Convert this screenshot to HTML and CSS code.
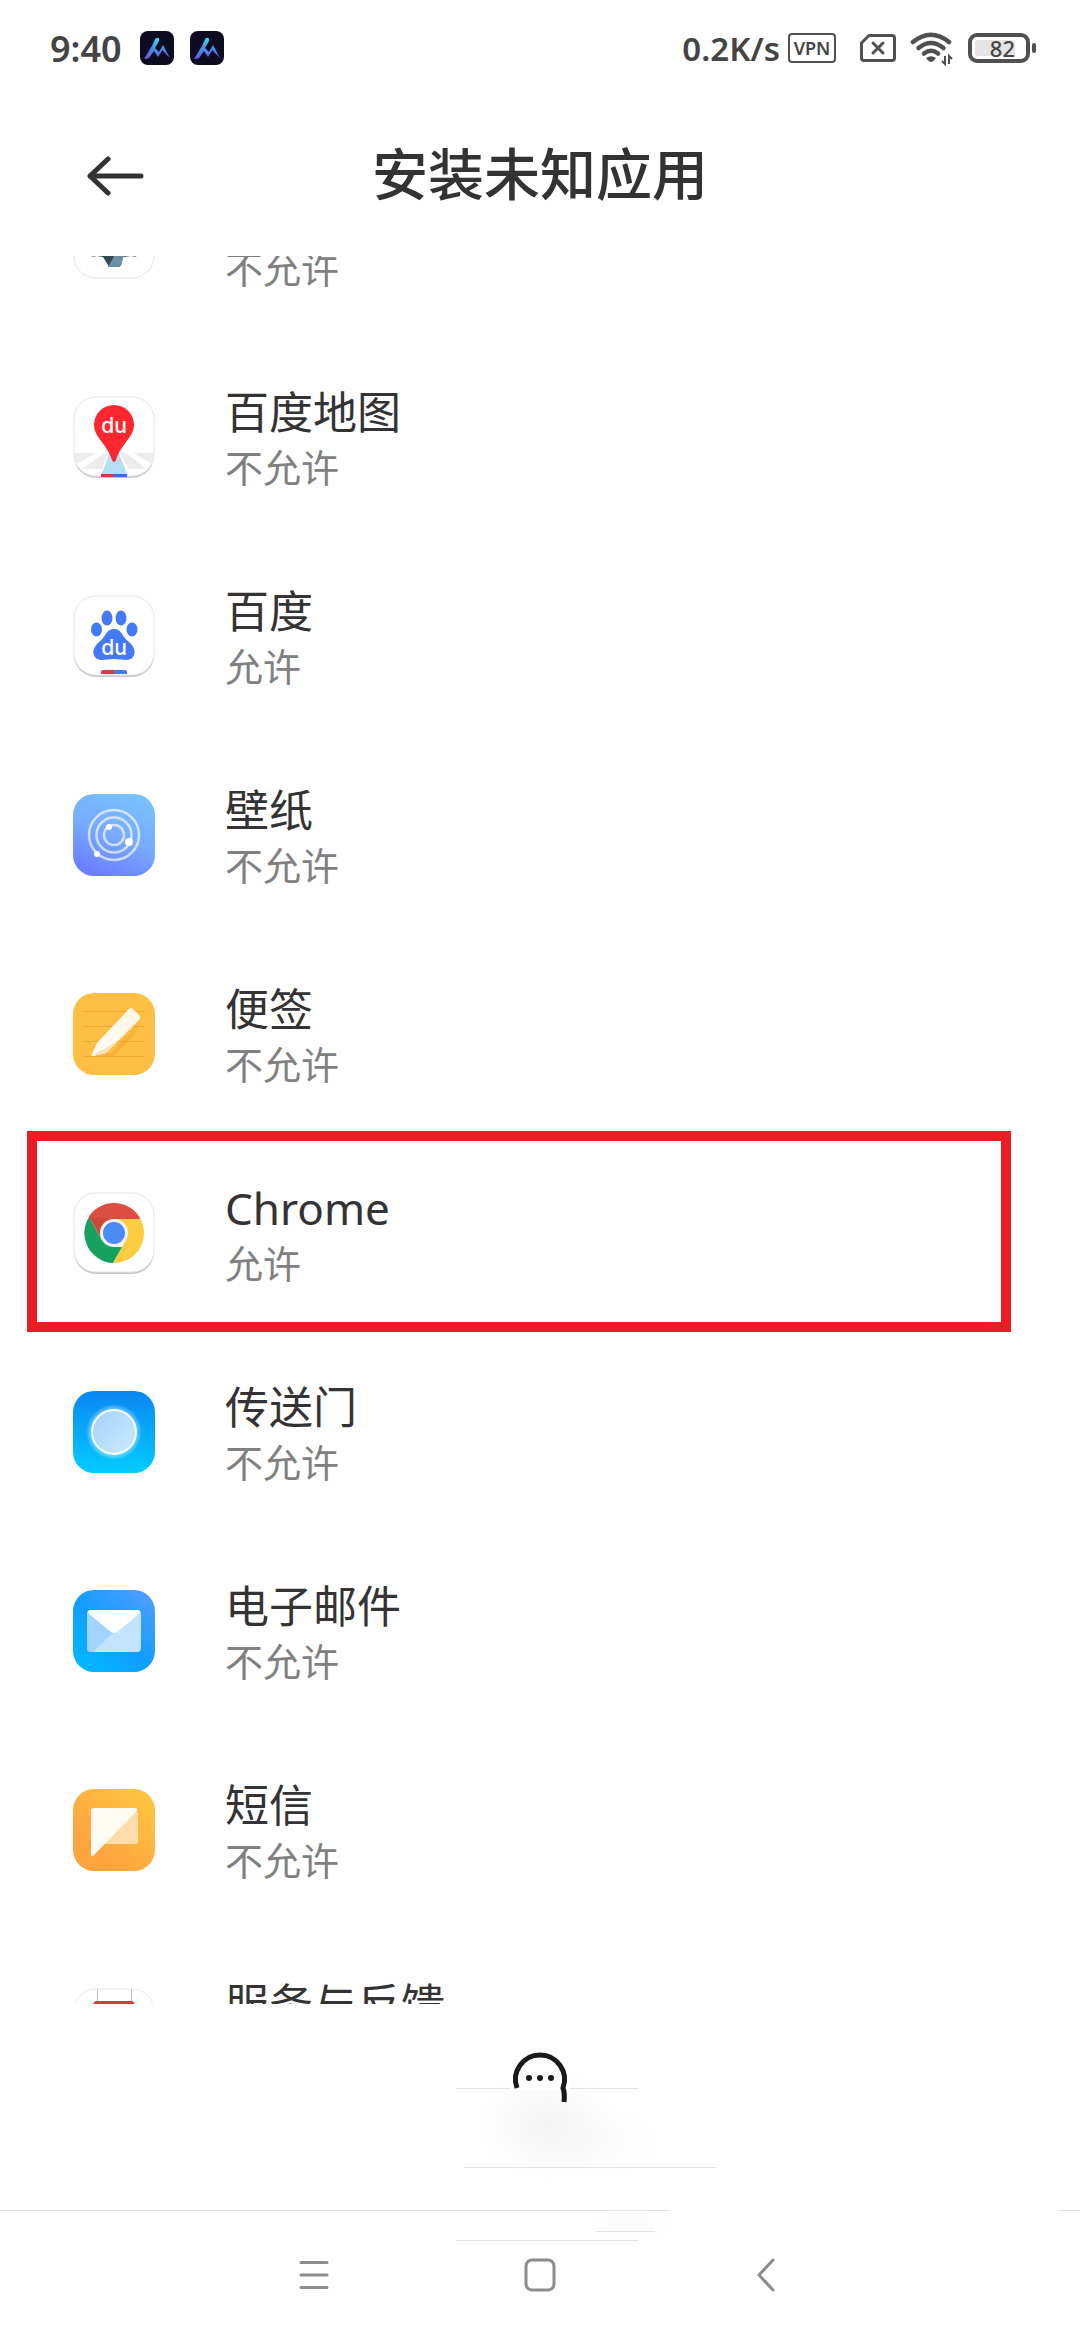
FILE: index.html
```
<!DOCTYPE html>
<html lang="zh-CN">
<head>
  <meta charset="UTF-8" />
  <meta name="viewport" content="width=device-width, initial-scale=1.0" />
  <title>安装未知应用</title>
  <link rel="stylesheet" href="styles.css">
</head>
<body>
  <div class="status-bar">
    <div class="status-left">
      <span class="time">9:40</span>
      <svg class="notice" viewBox="0 0 34 34">
        <defs>
          <linearGradient id="peak" x1="0" y1="0" x2="0" y2="1">
            <stop offset="0" stop-color="#3fe0ea" />
            <stop offset="0.5" stop-color="#4a90e8" />
            <stop offset="1" stop-color="#6a55d8" />
          </linearGradient>
        </defs>
        <rect width="34" height="34" rx="8" fill="#0d0b22" />
        <path id="mountain" d="M4 28L12 15L15.500 7.500Q17 6 19 7.500L19 10L15 17L19 21L23 14L30 27L24 21L22.500 19L18 26L14 20L9 27Q7 28 4 28Z" fill="url(#peak)" />
      </svg>
      <svg class="notice" viewBox="0 0 34 34">
        <rect width="34" height="34" rx="8" fill="#0d0b22" />
        <use href="#mountain" />
      </svg>
    </div>
    <div class="status-right">
      <span class="speed">0.2K/s</span>
      <span class="vpn">VPN</span>
      <svg class="sim" width="36" height="28" viewBox="0 0 36 28" fill="none" stroke="#505050" stroke-linejoin="round" stroke-linecap="round">
        <path d="M9 1.500H32Q34.500 1.500 34.500 4V24Q34.500 26.500 32 26.500H4Q1.500 26.500 1.500 24V9Z" stroke-width="3" />
        <path d="M13 9L23 19M23 9L13 19" stroke-width="3" />
      </svg>
      <svg class="wifi" width="44" height="34" viewBox="0 0 44 34">
        <g fill="none" stroke="#505050" stroke-width="4.500" stroke-linecap="round">
          <path d="M3 10Q21 -4.500 39 10" />
          <path d="M8.500 16Q21 6 33.500 16" />
          <path d="M14 21.500Q21 16 28 21.500" />
        </g>
        <path d="M16 26Q21 22.500 26 26Q23 30 21 30Q19 30 16 26Z" fill="#505050" />
        <path d="M35 24V32L32 29M39 32V24L42 27" fill="none" stroke="#505050" stroke-width="2" />
      </svg>
      <span class="battery"><span class="level">82</span></span>
    </div>
  </div>

  <header class="title-bar">
    <button class="back" aria-label="返回">
      <svg width="58" height="40" viewBox="0 0 58 40" fill="none" stroke="#333" stroke-width="5" stroke-linecap="round" stroke-linejoin="round">
        <path d="M54 20H3M21 3L3 20L21 37" />
      </svg>
    </button>
    <h1>安装未知应用</h1>
  </header>

  <main class="list">
    <a class="row" href="#">
      <svg class="icon" viewBox="0 0 82 82">
        <rect x="1" y="1" width="80" height="80" rx="22" fill="#fff" stroke="#e4e4e4" />
        <path d="M18 60L26 56L30 58L41 48L52 58L56 56L64 60L58 59L50 60L48 68Q47 70 45 70H37Q35 70 35 68L30 60L24 59Z" fill="#33474f" />
        <path d="M45 52L51 59L48 68Q47 70 45 70H35Z" fill="#6d8fa3" />
      </svg>
      <div class="info"><span class="name"></span><span class="state">不允许</span></div>
    </a>

    <a class="row" href="#">
      <svg class="icon" viewBox="0 0 82 82">
        <rect x="1" y="3" width="80" height="79" rx="22" fill="#c9c9c9" />
        <rect x="1" y="1" width="80" height="79" rx="22" fill="#fff" stroke="#e6e6e6" />
        <path d="M2 57H23L2 69ZM31 57H35L29 73H9ZM47 57H53L73 73H56ZM61 57H80V69Z" fill="#ececec" />
        <path d="M36 58H46L55 80H28Z" fill="#b3def3" />
        <path d="M28 78H41V81H28Z" fill="#d8354a" />
        <path d="M41 78H54V81H41Z" fill="#3d6ee0" />
        <path d="M41 9A20 20 0 0 0 21 29C21 41 34 48 39 64Q41 68 43 64C48 48 61 41 61 29A20 20 0 0 0 41 9Z" fill="#fb292f" />
        <text class="du" x="41" y="37" fill="#fff">du</text>
      </svg>
      <div class="info"><span class="name">百度地图</span><span class="state">不允许</span></div>
    </a>

    <a class="row" href="#">
      <svg class="icon" viewBox="0 0 82 82">
        <rect x="1" y="3" width="80" height="79" rx="22" fill="#c9c9c9" />
        <rect x="1" y="1" width="80" height="79" rx="22" fill="#fff" stroke="#e6e6e6" />
        <g fill="#4479f5">
          <ellipse cx="34" cy="23" rx="5.500" ry="7.500" />
          <ellipse cx="48" cy="23" rx="5.500" ry="7.500" />
          <ellipse cx="23.500" cy="34.500" rx="5.500" ry="7" />
          <ellipse cx="59" cy="34.500" rx="5.500" ry="7" />
          <path d="M41 34C49 34 49 42 56 47C62 52 63 58 60 62C56 67 50 64 41 64C32 64 26 67 22 62C19 58 20 52 26 47C33 42 33 34 41 34Z" />
        </g>
        <text class="du" x="41" y="60" fill="#fff">du</text>
        <path d="M41 75H30Q28 75 28 77V79H41Z" fill="#d33c49" />
        <path d="M41 75H52Q54 75 54 77V79H41Z" fill="#4479f5" />
      </svg>
      <div class="info"><span class="name">百度</span><span class="state">允许</span></div>
    </a>

    <a class="row" href="#">
      <svg class="icon" viewBox="0 0 82 82">
        <defs>
          <linearGradient id="wallpaper" x1="0.700" y1="0" x2="0.300" y2="1">
            <stop offset="0" stop-color="#78c1ff" />
            <stop offset="0.500" stop-color="#78abfd" />
            <stop offset="1" stop-color="#6b7dff" />
          </linearGradient>
        </defs>
        <rect width="82" height="82" rx="21" fill="url(#wallpaper)" />
        <g fill="none" stroke="#fff" stroke-opacity="0.650" stroke-width="2.500">
          <circle cx="41" cy="41" r="25" />
          <circle cx="41" cy="41" r="17.500" />
          <circle cx="41" cy="41" r="10" />
        </g>
        <circle cx="36" cy="33" r="3" fill="#fff" />
        <circle cx="56" cy="48" r="4" fill="#fff" />
        <circle cx="24" cy="60" r="3" fill="#fff" />
      </svg>
      <div class="info"><span class="name">壁纸</span><span class="state">不允许</span></div>
    </a>

    <a class="row" href="#">
      <svg class="icon" viewBox="0 0 82 82">
        <defs>
          <linearGradient id="pencil" x1="1" y1="0" x2="0" y2="1">
            <stop offset="0" stop-color="#fff6e6" />
            <stop offset="1" stop-color="#fffdf8" />
          </linearGradient>
        </defs>
        <rect width="82" height="82" rx="21" fill="#fdbf43" />
        <path d="M10 18.500H72M10 33.500H72M10 48.500H72M10 63.500H72" stroke="#e09f2c" stroke-opacity="0.700" />
        <path d="M22 62L38 60L68 28L60 44L40 64Z" fill="#f3a62c" opacity="0.500" />
        <path d="M56 16Q58 14 60 16L66 22Q68 24 66 27L34 59Q32 61 29 61L20 63Q18 63 19 61L24 50Z" fill="url(#pencil)" />
        <path d="M45 47L34 59Q32 61 29 61L20 63Q24 58 31 56Z" fill="#fbe3bd" />
      </svg>
      <div class="info"><span class="name">便签</span><span class="state">不允许</span></div>
    </a>

    <a class="row marked" href="#">
      <svg class="icon" viewBox="0 0 82 82">
        <rect x="1" y="3" width="80" height="79" rx="22" fill="#c9c9c9" />
        <rect x="1" y="1" width="80" height="79" rx="22" fill="#fff" stroke="#e6e6e6" />
        <path d="M41 41L15.500 25A30 30 0 0 1 67.500 27Z" fill="#db4e41" />
        <path d="M41 27H67.500A30 30 0 0 1 40 71L53 48Z" fill="#fdcd41" />
        <path d="M16 25L29 48L41 55H49L40 71A30 30 0 0 1 16 25Z" fill="#17a15f" />
        <path d="M16 25L28 46L41 27Z" fill="#cf463a" />
        <circle cx="41" cy="41" r="14" fill="#eef3fb" />
        <circle cx="41" cy="41" r="11" fill="#4c8bf5" />
      </svg>
      <div class="info"><span class="name">Chrome</span><span class="state">允许</span></div>
    </a>

    <a class="row" href="#">
      <svg class="icon" viewBox="0 0 82 82">
        <defs>
          <linearGradient id="portal" x1="0" y1="0" x2="0" y2="1">
            <stop offset="0" stop-color="#0a86f2" />
            <stop offset="1" stop-color="#04ccff" />
          </linearGradient>
          <linearGradient id="portal-glass" x1="0" y1="0" x2="1" y2="1">
            <stop offset="0" stop-color="#a4d2fb" />
            <stop offset="1" stop-color="#cdeafe" />
          </linearGradient>
          <radialGradient id="portal-glow">
            <stop offset="0.780" stop-color="#fff" stop-opacity="0.500" />
            <stop offset="1" stop-color="#fff" stop-opacity="0" />
          </radialGradient>
        </defs>
        <rect width="82" height="82" rx="21" fill="url(#portal)" />
        <circle cx="41" cy="41" r="28" fill="url(#portal-glow)" />
        <circle cx="41" cy="41" r="22" fill="url(#portal-glass)" stroke="#f4fbff" stroke-width="2" />
      </svg>
      <div class="info"><span class="name">传送门</span><span class="state">不允许</span></div>
    </a>

    <a class="row" href="#">
      <svg class="icon" viewBox="0 0 82 82">
        <defs>
          <linearGradient id="mail" x1="0.900" y1="0.100" x2="0.100" y2="1">
            <stop offset="0" stop-color="#4a9dff" />
            <stop offset="0.500" stop-color="#109eff" />
            <stop offset="1" stop-color="#00b9ff" />
          </linearGradient>
        </defs>
        <rect width="82" height="82" rx="21" fill="url(#mail)" />
        <rect x="14" y="20" width="54" height="42" rx="4" fill="#c4e3ff" />
        <path d="M15 22L40 43L20 62H18Q14 62 14 58V24Z" fill="#a3d3ff" />
        <path d="M18 20H64Q67 20 67 23L44 42Q41 44 38 42L15 23Q15 20 18 20Z" fill="#fff" />
      </svg>
      <div class="info"><span class="name">电子邮件</span><span class="state">不允许</span></div>
    </a>

    <a class="row" href="#">
      <svg class="icon" viewBox="0 0 82 82">
        <defs>
          <linearGradient id="sms" x1="1" y1="0" x2="0.300" y2="0.800">
            <stop offset="0" stop-color="#fec940" />
            <stop offset="1" stop-color="#fda440" />
          </linearGradient>
        </defs>
        <rect width="82" height="82" rx="21" fill="url(#sms)" />
        <path d="M64 22L31 55H62Q65 55 65 52V24Z" fill="#fedcab" />
        <path d="M21 19H62Q65 19 64 22L20 67Q18 68 18 66V22Q18 19 21 19Z" fill="#fffaf2" />
      </svg>
      <div class="info"><span class="name">短信</span><span class="state">不允许</span></div>
    </a>

    <a class="row" href="#">
      <svg class="icon" viewBox="0 0 82 82">
        <rect x="1" y="1" width="80" height="80" rx="22" fill="#fff" stroke="#ececec" />
        <path d="M24.500 1V14M58.500 1V14" stroke="#bbb" />
        <path d="M23 13H59Q62 14 62 18V60H20V18Q20 14 23 13Z" fill="#d9383f" />
      </svg>
      <div class="info"><span class="name">服务与反馈</span><span class="state"></span></div>
    </a>
  </main>

  <footer class="bottom">
    <!-- feedback bubble fading out over the bottom edge -->
    <svg class="fade" width="400" height="220" viewBox="0 0 400 220">
      <defs>
        <radialGradient id="smoke">
          <stop offset="0" stop-color="#f5f5f5" />
          <stop offset="1" stop-color="#f5f5f5" stop-opacity="0" />
        </radialGradient>
      </defs>
      <ellipse cx="208" cy="84" rx="68" ry="54" fill="url(#smoke)" />
      <ellipse cx="250" cy="102" rx="70" ry="36" fill="url(#smoke)" opacity="0.400" />
      <ellipse cx="290" cy="184" rx="40" ry="18" fill="url(#smoke)" opacity="0.400" />
      <path d="M116 48.500H298M124 127.500H376M256 191.500H315M116 200.500H298" stroke="#e3e3e3" />
      <path d="M170 38H230V50H170Z" fill="#fff" />
      <path d="M177 48A24.500 24.500 0 1 1 223 48Q225 53 224 62" fill="none" stroke="#1a1a1a" stroke-width="5" />
      <circle cx="189" cy="38" r="3" fill="#1a1a1a" />
      <circle cx="200" cy="38" r="3" fill="#1a1a1a" />
      <circle cx="211" cy="38" r="3" fill="#1a1a1a" />
    </svg>
  </footer>

  <nav class="nav-bar">
    <button aria-label="菜单">
      <svg width="30" height="34" viewBox="0 0 30 34" stroke="#8c8c8c" stroke-width="3" stroke-linecap="round">
        <path d="M2 4.500H28M2 17H28M2 29.500H28" />
      </svg>
    </button>
    <button aria-label="主屏幕">
      <svg width="32" height="34" viewBox="0 0 32 34" fill="none" stroke="#8c8c8c" stroke-width="3">
        <rect x="2" y="2" width="28" height="30" rx="6" />
      </svg>
    </button>
    <button aria-label="返回上一页">
      <svg width="18" height="34" viewBox="0 0 18 34" fill="none" stroke="#8c8c8c" stroke-width="3" stroke-linecap="round">
        <path d="M16 2L2 17L16 32" />
      </svg>
    </button>
  </nav>
</body>
</html>
```
FILE: styles.css
```
* {
  box-sizing: border-box;
}
body {
  margin: 0;
  height: 100vh;
  display: flex;
  flex-direction: column;
  background: #fefefe;
  color: #333;
  font-family: "Noto Sans", "Noto Sans CJK SC", sans-serif;
}
button {
  border: none;
  background: none;
  padding: 0;
  cursor: pointer;
}
svg {
  display: block;
}

.status-bar {
  display: flex;
  justify-content: space-between;
  align-items: center;
  height: 96px;
  padding: 0 50px;
  color: #444;
  font-weight: 600;
}
.status-left,
.status-right {
  display: flex;
  align-items: center;
}
.time {
  font-size: 36px;
  margin-right: 18px;
}
.notice {
  width: 34px;
  height: 34px;
  margin-right: 16px;
}
.speed {
  font-size: 33px;
  margin-right: 8px;
}
.vpn {
  width: 48px;
  height: 30px;
  border: 2px solid #505050;
  border-radius: 4px;
  font-size: 18px;
  line-height: 26px;
  text-align: center;
}
.sim {
  margin-left: 24px;
}
.wifi {
  margin: 2px 14px 0;
}
.battery {
  position: relative;
  width: 62px;
  height: 30px;
  padding: 3px;
  border: 4px solid #505050;
  border-radius: 9px;
}
.battery::after {
  content: "";
  position: absolute;
  right: -10px;
  top: 6px;
  width: 4px;
  height: 10px;
  border-radius: 2px;
  background: #505050;
}
.level {
  display: block;
  width: 40px;
  height: 16px;
  border-radius: 3px;
  background: #e4e4e4;
  font-size: 22px;
  font-weight: 500;
  line-height: 16px;
  text-align: right;
}

.title-bar {
  position: relative;
  display: flex;
  align-items: center;
  justify-content: center;
  height: 160px;
  padding-bottom: 6px;
}
.back {
  position: absolute;
  left: 87px;
  top: 60px;
}
h1 {
  margin: 0;
  font-size: 56px;
  line-height: 80px;
  font-weight: 500;
}

.list {
  flex: 1;
  min-height: 0;
  overflow: hidden;
}
.row {
  position: relative;
  display: flex;
  align-items: center;
  gap: 70px;
  height: 199px;
  padding-left: 73px;
  color: #333;
  text-decoration: none;
}
/* list is scrolled part way into the first row */
.row:first-child {
  margin-top: -118px;
}
.marked::after {
  content: "";
  position: absolute;
  top: -2px;
  right: 69px;
  bottom: 0;
  left: 27px;
  border: 10px solid #eb1c23;
}
.icon {
  width: 82px;
  height: 82px;
}
.du {
  font-family: Inter, sans-serif;
  font-size: 21px;
  font-weight: 500;
  text-anchor: middle;
}
.info {
  display: flex;
  flex-direction: column;
}
.name {
  height: 60px;
  font-size: 44px;
  line-height: 60px;
}
.state {
  height: 50px;
  font-size: 38px;
  line-height: 50px;
  color: #808080;
}

.bottom {
  position: relative;
  height: 206px;
}
.fade {
  position: absolute;
  top: 36px;
  left: 50%;
  margin-left: -200px;
}

.nav-bar {
  display: flex;
  justify-content: center;
  height: 130px;
  background: linear-gradient(to right, #e3e3e3 62%, transparent 62%, transparent 98%, #e3e3e3 98%) no-repeat top / 100% 1px;
}
.nav-bar button {
  display: flex;
  align-items: center;
  justify-content: center;
  width: 226px;
}
```
